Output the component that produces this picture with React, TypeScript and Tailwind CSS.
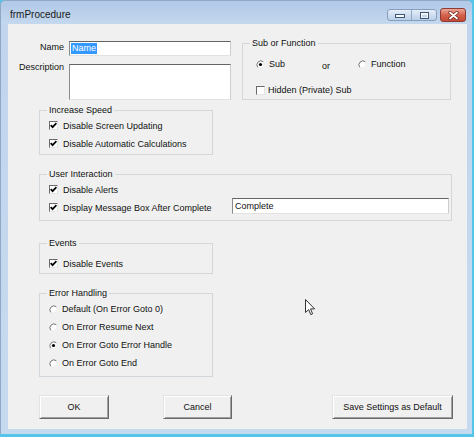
import React from "react";

function CheckBox({ checked }: { checked?: boolean }) {
  return (
    <span className="w-[9px] h-[9px] shrink-0 bg-white border border-t-[#6a6a6a] border-l-[#6a6a6a] border-r-[#e4e4e4] border-b-[#e4e4e4] flex items-center justify-center">
      {checked && (
        <svg width="7" height="7" viewBox="0 0 7 7">
          <path d="M0.7 3.2 L2.6 5.2 L6.4 1.2" stroke="#000" strokeWidth="1.7" fill="none" />
        </svg>
      )}
    </span>
  );
}

function Radio({ checked }: { checked?: boolean }) {
  return (
    <svg width="9" height="9" viewBox="0 0 9 9" className="shrink-0">
      <circle cx="4.5" cy="4.5" r="4" fill="#ffffff" />
      <path d="M1.7 7.3 A4 4 0 0 1 7.3 1.7" stroke="#6e6e6e" strokeWidth="1" fill="none" />
      <path d="M7.3 1.7 A4 4 0 0 1 1.7 7.3" stroke="#e6e6e6" strokeWidth="1" fill="none" />
      {checked && <circle cx="4.5" cy="4.5" r="1.6" fill="#000" />}
    </svg>
  );
}

function Group({
  title,
  className,
  children,
}: {
  title: string;
  className: string;
  children?: React.ReactNode;
}) {
  return (
    <div className={"border border-[#d2d7db] flex flex-col shrink-0 " + className}>
      <div className="-mt-[7px] ml-[7px] px-[2px] w-fit bg-[#f0f0f0] leading-[12px] text-[#111]">
        {title}
      </div>
      {children}
    </div>
  );
}

function Button({ label, className }: { label: string; className: string }) {
  return (
    <div
      className={
        "h-[24px] flex items-center justify-center bg-[#f0f0f0] border border-t-[#e3e3e3] border-l-[#e3e3e3] border-r-[#696969] border-b-[#696969] shadow-[inset_1px_1px_0_#ffffff,inset_-1px_-1px_0_#a0a0a0] text-[#111] " +
        className
      }
    >
      {label}
    </div>
  );
}

const inputBorder =
  "bg-white border border-t-[#646464] border-l-[#8a8a8a] border-r-[#cdcdcd] border-b-[#e2e2e2]";

export default function App() {
  return (
    <div className="w-[474px] h-[437px] bg-[#55c6ea] overflow-hidden font-['Liberation_Sans',Arial,sans-serif] text-[9px] leading-[12px] text-[#111]">
      <div className="w-[472px] h-[434px] flex flex-col bg-gradient-to-b from-[#c0d5ed] to-[#c6daef] border-l border-t border-[#8ea8c6] rounded-t-[5px]">
        {/* title bar */}
        <div className="h-[23px] flex items-start rounded-t-[5px] bg-gradient-to-b from-[#b1c9e7] to-[#c4d8ee]">
          <span className="ml-[9px] mt-[8px] text-[10px] leading-[12px] text-[#1a1a1a]">
            frmProcedure
          </span>
          <div className="ml-auto mr-[6px] mt-[7px] flex items-start">
            <div className="mt-[1px] h-[12px] flex rounded-[3px] border border-[#869fbf] bg-gradient-to-b from-[#e6eef8] via-[#cfdef0] to-[#bcd0e8] overflow-hidden">
              <div className="w-[24px] flex items-end justify-center pb-[2px] border-r border-[#8ea6c4]">
                <svg width="10" height="4" viewBox="0 0 10 4">
                  <rect x="0.5" y="0.5" width="9" height="3" fill="#ffffff" stroke="#3e5675" />
                </svg>
              </div>
              <div className="w-[24px] flex items-center justify-center">
                <svg width="9" height="7" viewBox="0 0 9 7">
                  <rect x="0.5" y="0.5" width="8" height="6" fill="#ffffff" stroke="#3e5675" />
                  <rect x="2" y="2.5" width="5" height="3" fill="#c7d7ea" />
                </svg>
              </div>
            </div>
            <div className="ml-[3px] w-[26px] h-[14px] rounded-[3px] border border-[#8d3b30] bg-gradient-to-b from-[#eaa79a] via-[#d4614d] to-[#c44a36] flex items-center justify-center">
              <svg width="11" height="9" viewBox="0 0 11 9">
                <path d="M2 1.5 L9 7.5 M9 1.5 L2 7.5" stroke="#6e2a20" strokeWidth="3.4" strokeLinecap="round" />
                <path d="M2 1.5 L9 7.5 M9 1.5 L2 7.5" stroke="#ffffff" strokeWidth="1.8" strokeLinecap="round" />
              </svg>
            </div>
          </div>
        </div>

        {/* client area */}
        <div className="relative ml-[7px] w-[459px] h-[405px] bg-[#f0f0f0] flex flex-col pt-[17px]">
          <div className="flex items-start">
            <div className="w-[223px] flex flex-col shrink-0">
              <div className="flex items-start">
                <span className="w-[56px] text-right">Name</span>
                <div className={"ml-[5px] w-[162px] h-[15px] flex items-center pl-[1px] " + inputBorder}>
                  <span className="bg-[#3399ff] text-white leading-[11px] px-[1px]">Name</span>
                </div>
              </div>
              <div className="mt-[8px] flex items-start">
                <span className="w-[56px] text-right -mt-[3px]">Description</span>
                <div className={"ml-[5px] w-[162px] h-[36px] " + inputBorder} />
              </div>
            </div>
            <Group title="Sub or Function" className="ml-[11px] mt-[2px] w-[209px] h-[57px]">
              <div className="mt-[6px] h-[18px] flex items-center pl-[13px]">
                <Radio checked />
                <span className="ml-[4px]">Sub</span>
                <span className="ml-[37px] mt-[4px]">or</span>
                <span className="ml-[28px] flex items-center">
                  <Radio />
                </span>
                <span className="ml-[4px]">Function</span>
              </div>
              <div className="mt-[8px] h-[18px] flex items-center pl-[13px]">
                <CheckBox />
                <span className="ml-[3px]">Hidden (Private) Sub</span>
              </div>
            </Group>
          </div>

          <Group title="Increase Speed" className="mt-[10px] ml-[31px] w-[174px] h-[45px]">
            <div className="mt-[1px] flex flex-col gap-[1px] pl-[9px]">
              <div className="h-[17px] flex items-center">
                <CheckBox checked />
                <span className="ml-[5px]">Disable Screen Updating</span>
              </div>
              <div className="h-[17px] flex items-center">
                <CheckBox checked />
                <span className="ml-[5px]">Disable Automatic Calculations</span>
              </div>
            </div>
          </Group>

          <Group title="User Interaction" className="mt-[19px] ml-[31px] w-[413px] h-[47px]">
            <div className="mt-[1px] flex flex-col gap-[1px] pl-[9px]">
              <div className="h-[17px] flex items-center">
                <CheckBox checked />
                <span className="ml-[5px]">Disable Alerts</span>
              </div>
              <div className="h-[17px] flex items-center">
                <CheckBox checked />
                <span className="ml-[5px] w-[169px] shrink-0">Display Message Box After Complete</span>
                <div className={"w-[217px] h-[16px] mb-[3px] flex items-center pl-[2px] shrink-0 " + inputBorder}>
                  Complete
                </div>
              </div>
            </div>
          </Group>

          <Group title="Events" className="mt-[22px] ml-[31px] w-[174px] h-[31px]">
            <div className="mt-[6px] h-[17px] flex items-center pl-[9px]">
              <CheckBox checked />
              <span className="ml-[5px]">Disable Events</span>
            </div>
          </Group>

          <Group title="Error Handling" className="mt-[19px] ml-[31px] w-[174px] h-[84px]">
            <div className="mt-[1px] flex flex-col pl-[9px]">
              {[
                ["Default (On Error Goto 0)", false],
                ["On Error Resume Next", false],
                ["On Error Goto Error Handle", true],
                ["On Error Goto End", false],
              ].map(([label, on]) => (
                <div key={label as string} className="h-[18px] flex items-center">
                  <Radio checked={on as boolean} />
                  <span className="ml-[4px]">{label as string}</span>
                </div>
              ))}
            </div>
          </Group>

          <div className="mt-[18px] flex items-start">
            <Button label="OK" className="ml-[31px] w-[70px]" />
            <Button label="Cancel" className="ml-[54px] w-[69px]" />
            <Button label="Save Settings as Default" className="ml-[100px] w-[121px]" />
          </div>

          {/* mouse pointer */}
          <svg
            className="absolute left-[297px] top-[275px]"
            width="11"
            height="17"
            viewBox="0 0 11 17"
          >
            <path
              d="M0.5 0.5 L0.5 13.5 L3.6 10.6 L5.8 15.6 L7.6 14.8 L5.5 9.9 L9.6 9.9 Z"
              fill="#ffffff"
              stroke="#333"
              strokeWidth="1"
              strokeLinejoin="round"
            />
          </svg>
        </div>
      </div>
    </div>
  );
}
